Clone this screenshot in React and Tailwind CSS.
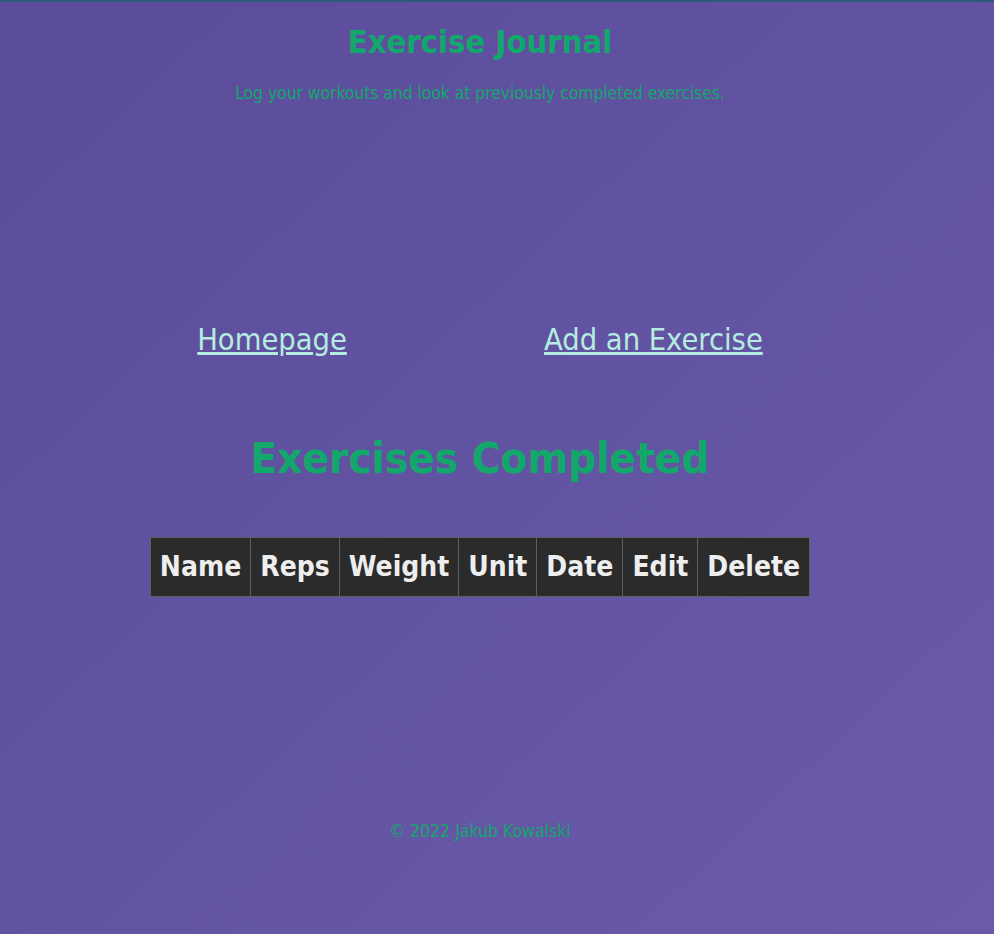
export default function App() {
  const cols = ["Name", "Reps", "Weight", "Unit", "Date", "Edit", "Delete"];

  return (
    <div className="min-h-[934px] border-t-2 border-[#2d5a7a] bg-gradient-to-br from-[#5a4c9b] to-[#6b5aaa] font-['DejaVu_Sans_Condensed','DejaVu_Sans',sans-serif]">
      <div className="w-[960px] flex flex-col items-center">
        <header className="flex flex-col items-center pt-[20px]">
          <h1 className="text-[32.5px] font-bold text-[#12a86b] leading-[40px]">
            Exercise Journal
          </h1>
          <p className="mt-[21px] text-[17.3px] text-[#12a86b] leading-[20px]">
            Log your workouts and look at previously completed exercises.
          </p>
        </header>

        <nav className="w-full flex justify-evenly mt-[217px]">
          <a href="#" className="text-[30.5px] text-[#b4ecdf] underline leading-[40.5px]">
            Homepage
          </a>
          <a href="#" className="text-[30.5px] text-[#b4ecdf] underline leading-[40.5px]">
            Add an Exercise
          </a>
        </nav>

        <main className="flex flex-col items-center mt-[70px]">
          <h2 className="text-[43.5px] font-bold text-[#12a86b] leading-[54px]">
            Exercises Completed
          </h2>
          <table className="mt-[52px] border-collapse bg-[#2b2b2b]">
            <thead>
              <tr>
                {cols.map((c) => (
                  <th
                    key={c}
                    className="border border-[#5e5e5e] px-[9px] py-3 text-[28px] font-bold text-[#eeeeee] leading-[34px]"
                  >
                    {c}
                  </th>
                ))}
              </tr>
            </thead>
          </table>
        </main>

        <footer className="mt-[222px] text-[17.5px] text-[#12a86b] leading-[24px]">
          &copy; 2022 Jakub Kowalski
        </footer>
      </div>
    </div>
  );
}
